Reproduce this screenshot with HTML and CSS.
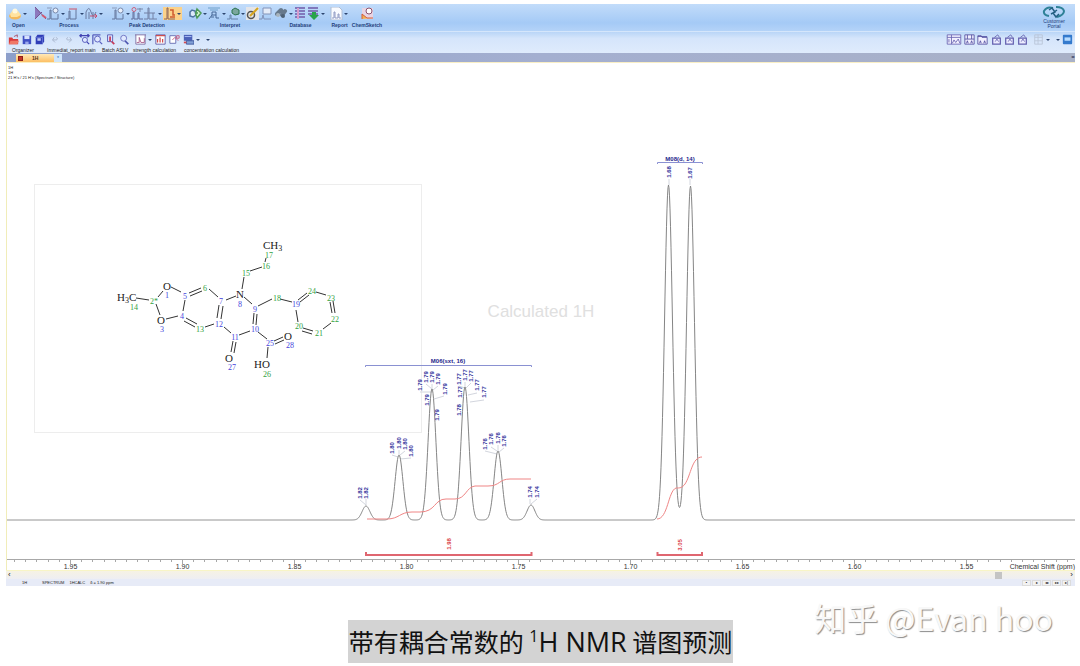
FILE: index.html
```html
<!DOCTYPE html>
<html lang="zh">
<head>
<meta charset="utf-8">
<title>带有耦合常数的 1H NMR 谱图预测</title>
<link rel="stylesheet" href="styles.css">
</head>
<body>
<svg class="defs" aria-hidden="true">
  <symbol id="folder" viewBox="0 0 13 13"><ellipse cx="6" cy="9" rx="6" ry="3.5" fill="#f4b95c"/><path d="M1 7l3-4 5 1 3 4-4 2-6 0z" fill="#ffe3a0"/><circle cx="6" cy="4" r="2.5" fill="#fff8de"/></symbol>
  <symbol id="wedge" viewBox="0 0 13 13"><path d="M1 0v12l6-6z" fill="#8c78bd"/><path d="M1 0l11 12M1 12L8 5" stroke="#76538e" fill="none"/><path d="M8 8l4 3" stroke="#d05a70" stroke-width="2"/></symbol>
  <symbol id="peakc" viewBox="0 0 13 13"><path d="M0 12h3V3h1v9h7V7" fill="none" stroke="#65779c"/><circle cx="8.500" cy="3.500" r="2.500" fill="#e9effa" stroke="#7888aa"/><path d="M0 1h5" stroke="#8b9bbb"/></symbol>
  <symbol id="peakb" viewBox="0 0 13 13"><path d="M0 12h3V4h1v8h6V2" fill="none" stroke="#65779c"/><path d="M3 2h8" stroke="#c77e96" stroke-width="1.500"/></symbol>
  <symbol id="phase" viewBox="0 0 13 13"><path d="M1 12V5q3-7 5 0t5 0M4 12V5M8 12V5" fill="none" stroke="#6b7ba0"/><path d="M5 9h7m-2-2 2 2-2 2" stroke="#c8496b" fill="none"/></symbol>
  <symbol id="multi" viewBox="0 0 13 13"><path d="M0 12h2V5h1v7h4V6h1v6h4" fill="none" stroke="#626f9b"/><circle cx="3" cy="2.500" r="2" fill="none" stroke="#ca617d"/><path d="M6 2h6M9 1v4" stroke="#7888aa"/></symbol>
  <symbol id="integral" viewBox="0 0 13 13"><path d="M0 12h4V1h1v11h8M9 12V6M0 6h11" fill="none" stroke="#7380a4"/></symbol>
  <symbol id="active" viewBox="0 0 13 13"><path d="M1 12h3V1h1v11h7" fill="none" stroke="#8f6657"/><path d="M7 3h3v5h2M7 10h5" fill="none" stroke="#cf5b2f" stroke-width="1.500"/></symbol>
  <symbol id="hex" viewBox="0 0 13 13"><path d="M1 5l2-2 3 1 1 4-3 2-3-1z" fill="#dce9fa" stroke="#4b729f" stroke-width="1.500"/><path d="M6 6h3M8 2l4 4-4 5-1-3V5z" fill="#d6f3ce" stroke="#4c9b57" stroke-width="1.500"/></symbol>
  <symbol id="assign" viewBox="0 0 13 13"><path d="M0 1h12M2 3h8" stroke="#6c9fca"/><path d="M4 5h4v3H4zM4 8l-3 4M8 8v3h3M3 10h3" fill="none" stroke="#456796"/></symbol>
  <symbol id="greenhex" viewBox="0 0 13 13"><path d="M0 12h3V8h1v4h7" fill="none" stroke="#6884aa"/><path d="M8 1l4 2v4l-4 1-3-2V3z" fill="#79a69d" stroke="#2b724d"/></symbol>
  <symbol id="pencil" viewBox="0 0 13 13"><rect width="13" height="13" fill="#e4e5e9"/><circle cx="5" cy="8" r="3.500" fill="none" stroke="#555" stroke-width="1.500"/><path d="M4 9L12 1" stroke="#d7a51f" stroke-width="2"/></symbol>
  <symbol id="report" viewBox="0 0 13 13"><path d="M4 1h8v6H4z" fill="#e4ebf8" stroke="#8192b8"/><path d="M0 12h3l1-4 1 4h7" fill="none" stroke="#8192b8"/></symbol>
  <symbol id="binoc" viewBox="0 0 13 13"><path d="M2 7l4-4M7 8l3-4" stroke="#67798c" stroke-width="4" stroke-linecap="round"/><circle cx="3" cy="8" r="2" fill="#a8b4be"/><circle cx="8" cy="9" r="2" fill="#4e6175"/></symbol>
  <symbol id="base" viewBox="0 0 13 13"><path d="M1 1h10M1 4h10M1 7h10M1 10h10" stroke="#8178bc" stroke-width="2"/><path d="M4 1v11" stroke="#d79ccc" stroke-width="2"/></symbol>
  <symbol id="basedown" viewBox="0 0 13 13"><path d="M1 1h10M1 4h10M1 7h10" stroke="#8178bc" stroke-width="2"/><path d="M5 5h4v3h3l-5 5-5-5h3z" fill="#29a34b"/></symbol>
  <symbol id="page" viewBox="0 0 13 13"><path d="M1 0h8l3 3v10H1z" fill="#f9fbff" stroke="#b0bed4"/><path d="M2 11h2V5h1v6h3V7h1v4h2" fill="none" stroke="#8f9ac3"/></symbol>
  <symbol id="sketch" viewBox="0 0 13 13"><path d="M1 1h11v11H1z" fill="#e8d4e3"/><circle cx="8" cy="4" r="3" fill="#fff" stroke="#8a526f"/><path d="M1 12V7l5 4h6" fill="#efb253" stroke="#d35e3d"/></symbol>
  <symbol id="portal" viewBox="0 0 24 13"><path d="M11 2Q5 0 2 5q-1 4 5 5M14 1q7 0 8 4 0 4-7 6" fill="none" stroke="#2e8197" stroke-width="2"/><path d="M7 4l3-2 3 4-4 2M17 8l-3 3-3-4 4-3" fill="none" stroke="#245f83" stroke-width="1.500"/></symbol>
  <symbol id="open2" viewBox="0 0 13 13"><path d="M1 4h4l1 2h6v6H1z" fill="#d83b3c"/><path d="M3 8h10l-2 4H1z" fill="#f07867"/><path d="M7 3l4-2v3" fill="none" stroke="#a64259"/></symbol>
  <symbol id="save" viewBox="0 0 13 13"><path d="M2 2h10v10H2z" fill="#3f4fc3"/><path d="M4 2h6v4H4z" fill="#d7e1ff"/><path d="M5 9h4v3H5z" fill="#9aa9ed"/></symbol>
  <symbol id="saveall" viewBox="0 0 13 13"><path d="M4 1h8v8l-2 3H2V4z" fill="#303eb8"/><path d="M4 5h4v3H4z" fill="#bdc9f5"/><path d="M2 4h8v8M10 4l2-3" fill="none" stroke="#6778d5"/></symbol>
  <symbol id="undo" viewBox="0 0 13 13"><path d="M5 4L3 7l3 3M3 7h5q2-2-1-3" fill="none" stroke="#a6b3cb"/></symbol>
  <symbol id="redo" viewBox="0 0 13 13"><path d="M8 4l2 3-3 3m3-3H5Q3 5 6 4" fill="none" stroke="#a6b3cb"/></symbol>
  <symbol id="zoomx" viewBox="0 0 13 13"><path d="M1 2h11M3 0L1 2l2 2M10 0l2 2-2 2M9 9l3 3" fill="none" stroke="#4243b3" stroke-width="1.500"/><circle cx="7" cy="7" r="3" fill="#dfe8ff" stroke="#4b50b8"/></symbol>
  <symbol id="zoomy" viewBox="0 0 13 13"><path d="M1 1v11M1 1h9M9 9l3 3" stroke="#5860bf" stroke-width="1.500"/><circle cx="6.500" cy="6" r="3.500" fill="#dfe8ff" stroke="#4b50b8"/></symbol>
  <symbol id="zoomr" viewBox="0 0 13 13"><path d="M3 1h6v8H3z" fill="#dce4ff" stroke="#5053ae"/><path d="M6 3v6M8 9l3 3" stroke="#c63b59" stroke-width="2"/></symbol>
  <symbol id="zoom" viewBox="0 0 13 13"><path d="M7 8l4 4" stroke="#4c55b0" stroke-width="2"/><circle cx="5.500" cy="5" r="3.500" fill="#dfe8ff" stroke="#6268bd"/></symbol>
  <symbol id="chart" viewBox="0 0 13 13"><path d="M0 1h13M1 1v11h11V1" fill="#fff" stroke="#77669c"/><path d="M2 10h3V4l2 6h4V5" fill="none" stroke="#a45886"/></symbol>
  <symbol id="chartr" viewBox="0 0 13 13"><path d="M1 1h11v11H1z" fill="#fff" stroke="#5953a3"/><path d="M1 2h11M3 10V6M6 10V4M9 10V6" stroke="#ce4e4e" stroke-width="1.500"/></symbol>
  <symbol id="links" viewBox="0 0 13 13"><path d="M1 2h7v9H1z" fill="#fff" stroke="#5d63ad"/><path d="M4 7l3-3 4 4M9 2h3v3H9z" fill="none" stroke="#c34f77"/></symbol>
  <symbol id="screen" viewBox="0 0 13 13"><path d="M1 1h10v7H1z" fill="#4c62b8"/><path d="M2 3h8" stroke="#b5c9ff"/><path d="M4 8h9v4H4z" fill="#81a0d6" stroke="#344f99"/><path d="M1 10h3" stroke="#d34a50" stroke-width="2"/></symbol>
  <symbol id="tile" viewBox="0 0 18 13"><path d="M1 1h16v11H1zM1 4h16M6 1v11" fill="#f2f0ff" stroke="#6661b0"/><path d="M7 11l2-4 2 3 3-4 2 5M3 6v4" fill="none" stroke="#6661b0"/></symbol>
  <symbol id="grid" viewBox="0 0 13 13"><path d="M1 1h11v11H1zM1 6h11M4 1v5M9 1v5" fill="#f2f0ff" stroke="#514c9f"/><path d="M3 11l1-3 1 3M8 11l1-3 1 3" fill="none" stroke="#514c9f"/></symbol>
  <symbol id="win" viewBox="0 0 13 13"><path d="M1 2h4l1 2h6v8H1z" fill="#f2f0ff" stroke="#514c9f"/><path d="M1 3h11" stroke="#514c9f"/><path d="M3 11l1-3 1 3M8 11l1-3 1 3" fill="none" stroke="#514c9f"/></symbol>
  <symbol id="winopen" viewBox="0 0 13 13"><path d="M2 5h9v7H2z" fill="#ececff" stroke="#6461b0" stroke-width="1.500"/><path d="M4 4l4-3 2 3M5 9l2-3 2 3" fill="none" stroke="#6461b0"/></symbol>
  <symbol id="faded" viewBox="0 0 13 13"><path d="M2 1h9v11H2zM2 4h9M2 8h9M6 1v11" fill="none" stroke="#b9c5d7"/></symbol>
  <symbol id="bluebox" viewBox="0 0 13 13"><rect x="1" y="1" width="11" height="11" rx="1" fill="#347acd"/><path d="M3 4h7v4H3z" fill="#b7dcff"/></symbol>
</svg>

<main class="app">
  <header class="ribbon">
    <section class="group g-open"><div class="icons"><button class="tool drop" aria-label="Open"><svg><use href="#folder"/></svg></button></div><span>Open</span></section>
    <section class="group g-process"><div class="icons"><button class="tool" aria-label="Fourier transform"><svg><use href="#wedge"/></svg></button><button class="tool drop" aria-label="Calibrate"><svg><use href="#peakc"/></svg></button><button class="tool drop" aria-label="Baseline"><svg><use href="#peakb"/></svg></button><button class="tool drop" aria-label="Phase"><svg><use href="#phase"/></svg></button></div><span>Process</span></section>
    <section class="group g-peak"><div class="icons"><button class="tool drop" aria-label="Peak"><svg><use href="#peakc"/></svg></button><button class="tool" aria-label="Peak levels"><svg><use href="#multi"/></svg></button><button class="tool drop" aria-label="Integrals"><svg><use href="#integral"/></svg></button><button class="tool drop on" aria-label="Multiplets"><svg><use href="#active"/></svg></button></div><span>Peak Detection</span></section>
    <section class="group g-interpret"><div class="icons"><button class="tool drop" aria-label="Structure"><svg><use href="#hex"/></svg></button><button class="tool drop" aria-label="Assign"><svg><use href="#assign"/></svg></button><button class="tool drop" aria-label="Verify"><svg><use href="#greenhex"/></svg></button><button class="tool" aria-label="Edit"><svg><use href="#pencil"/></svg></button><button class="tool" aria-label="Annotate"><svg><use href="#report"/></svg></button></div><span>Interpret</span></section>
    <section class="group g-database"><div class="icons"><button class="tool drop" aria-label="Search"><svg><use href="#binoc"/></svg></button><button class="tool" aria-label="Database"><svg><use href="#base"/></svg></button><button class="tool drop" aria-label="Update database"><svg><use href="#basedown"/></svg></button></div><span>Database</span></section>
    <section class="group g-report"><div class="icons"><button class="tool drop" aria-label="Report"><svg><use href="#page"/></svg></button></div><span>Report</span></section>
    <section class="group g-sketch"><div class="icons"><button class="tool" aria-label="ChemSketch"><svg><use href="#sketch"/></svg></button></div><span>ChemSketch</span></section>
    <button class="portal"><svg><use href="#portal"/></svg><span>Customer<br>Portal</span></button>
  </header>

  <nav class="toolbar">
    <div class="left">
      <div class="icons">
        <button class="tool" aria-label="Open file"><svg><use href="#open2"/></svg></button><button class="tool" aria-label="Save"><svg><use href="#save"/></svg></button><button class="tool" aria-label="Save all"><svg><use href="#saveall"/></svg></button>
        <button class="tool sep" aria-label="Undo"><svg><use href="#undo"/></svg></button><button class="tool" aria-label="Redo"><svg><use href="#redo"/></svg></button>
        <button class="tool sep" aria-label="Zoom X"><svg><use href="#zoomx"/></svg></button><button class="tool" aria-label="Zoom Y"><svg><use href="#zoomy"/></svg></button><button class="tool" aria-label="Zoom region"><svg><use href="#zoomr"/></svg></button><button class="tool gap" aria-label="Zoom out"><svg><use href="#zoom"/></svg></button>
        <button class="tool drop sep" aria-label="View"><svg><use href="#chart"/></svg></button><button class="tool gap" aria-label="Table"><svg><use href="#chartr"/></svg></button><button class="tool gap" aria-label="Link"><svg><use href="#links"/></svg></button><button class="tool drop gap" aria-label="Screen"><svg><use href="#screen"/></svg></button><button class="tool drop more" aria-label="More"></button>
      </div>
      <div class="names"><span>Organizer</span><span>Immediat_report main</span><span>Batch ASLV</span><span>strength calculation</span><span>concentration calculation</span></div>
    </div>
    <div class="icons right">
      <button class="tool wide" aria-label="Tile"><svg><use href="#tile"/></svg></button><button class="tool" aria-label="Stack"><svg><use href="#grid"/></svg></button><button class="tool" aria-label="Cascade"><svg><use href="#win"/></svg></button><button class="tool gap" aria-label="Import"><svg><use href="#winopen"/></svg></button><button class="tool" aria-label="Export"><svg><use href="#winopen"/></svg></button><button class="tool" aria-label="Export all"><svg><use href="#winopen"/></svg></button><button class="tool drop sep" aria-label="Layout"><svg><use href="#faded"/></svg></button><button class="tool drop more" aria-label="Options"></button><button class="tool" aria-label="Window"><svg><use href="#bluebox"/></svg></button>
    </div>
  </nav>

  <div class="tabs"><button class="tab"><i></i>1H</button><button class="newtab" aria-label="New tab">*</button><span class="tabend">◂▸</span></div>

  <svg class="plot" viewBox="7 63 1068 507" role="img" aria-label="Calculated 1H spectrum">
    <g class="info"><text x="8" y="69">1H</text><text x="8" y="74">1H</text><text x="8" y="79">21 H's / 21 H's (Spectrum / Structure)</text></g>
    <rect class="frame" x="34.500" y="184.500" width="387" height="248"/>
    <text class="calc" x="541" y="317">Calculated 1H</text>
    <path class="bond" d="M136 298l13 2M158 297l5-6M171 287l10 5M156 304l4 11M166 319l12-3M185 300l-2 11M189 293l12-5M190 296l12-5M209 289l9 8M186 318l11 6M184 321l11 6M205 327l9-3M219 305l-2 13M223 306l-2 13M226 300l10-4M244 297l8 7M242 289l2-12M250 271l12-4M265 262l1-4M258 306l14-7M280 299l12 3M298 300l9-7M300 302l9-7M316 292l10 3M330 302l2 11M333 301l2 12M331 323l-8 6M313 331l-10-3M312 334l-10-3M298 322l-2-12M254 313l-1 11M257 314l-1 11M224 327l7 6M239 335l11-4M233 341l-2 11M236 342l-2 11M258 332l9 7M274 341l9-4M275 344l9-4M268 347l-1 11"/>
    <g class="atom"><text x="263" y="249">CH<tspan class="sub" dy="2">3</tspan></text><text x="117" y="301">H<tspan class="sub" dy="2">3</tspan><tspan dy="-2">C</tspan></text><text x="163" y="290">O</text><text x="157" y="324">O</text><text x="236" y="298">N</text><text x="225" y="362">O</text><text x="284" y="340">O</text><text x="254" y="368">HO</text></g>
    <g class="num green"><text x="269" y="258">17</text><text x="266" y="269">16</text><text x="246" y="276">15</text><text x="205" y="291">6</text><text x="154" y="304">2*</text><text x="134" y="310">14</text><text x="200" y="332">13</text><text x="277" y="301">18</text><text x="312" y="294">24</text><text x="331" y="301">23</text><text x="335" y="322">22</text><text x="319" y="336">21</text><text x="299" y="329">20</text><text x="267" y="377">26</text></g>
    <g class="num blue"><text x="167" y="298">1</text><text x="162" y="332">3</text><text x="182" y="319">4</text><text x="185" y="299">5</text><text x="221" y="304">7</text><text x="240" y="307">8</text><text x="255" y="312">9</text><text x="255" y="332">10</text><text x="235" y="340">11</text><text x="219" y="327">12</text><text x="296" y="307">19</text><text x="270" y="346">25</text><text x="232" y="370">27</text><text x="290" y="348">28</text></g>
    <path class="leader" d="M360 500l6 5M366 499v6M392 455l6 2M399 450v5M405 451l-5 4M411 458l-11 1M420 392l11 0M426 384l6 5M432 384v5M438 386l-5 4M444 396l-10 3M459 386l6 2M465 382v5M471 383l-5 5M477 393l-9 2M484 400l-14 2M485 451l12 3M491 447l6 4M498 445v6M504 448l-5 4M530 499v5M537 499l-6 5M669 179v6M690 179v6"/>
    <path id="trace" class="trace"/>
    <path class="red" d="M367 519h20C399 519 400 512 412 512h8C436 512 434 499 446 499h9C466 499 466 487 475 486h13C500 486 499 479 510 479h21M657 519C668 519 668 491 676 488C680 488 682 488 685 484C691 475 692 457 702 457"/>
    <path class="bar" d="M365.500 367v-1.500h166v1.500M657.500 164v-1.500h45v1.500"/>
    <g class="mult"><text x="448" y="363">M06(sxt, 16)</text><text x="680" y="161">M08(d, 14)</text></g>
    <g id="shifts" class="shift"></g>
    <path class="redbar" d="M366 552v3h165.500v-3M657.500 552v3h44.500v-3"/>
    <g class="area"><text transform="translate(451 544) rotate(-90)">1.98</text><text transform="translate(682 545) rotate(-90)">3.05</text></g>
    <path id="axis" class="axis"/>
    <g id="ticks" class="ticks"></g>
    <text class="axname" x="1075" y="569">Chemical Shift (ppm)</text>
  </svg>

  <div class="scroll"><button aria-label="Scroll left">‹</button><span class="thumb"></span><button aria-label="Scroll right">›</button></div>
  <footer class="status"><span class="nuc">1H</span><span>SPECTRUM</span><span>1HCALC</span><span>δ = 1.90 ppm</span><div class="nav"><button>▪</button><button>▸</button><button>◂▸</button><button>▸▸</button><button>▸|</button></div></footer>
</main>

<section class="below"><h1>带有耦合常数的 <span class="latin"><sup>1</sup>H NMR</span> 谱图预测</h1><p>知乎 @Evan hoo</p></section>
<script src="plot.js"></script>
</body>
</html>
```
FILE: styles.css
```css
* { box-sizing: border-box; }
body { margin: 0; padding: 4px 5px 0 6px; background: #fff; font-family: "Liberation Sans", "Noto Sans CJK SC", sans-serif; }
button { border: 0; padding: 0; margin: 0; background: none; font: inherit; color: inherit; }
.defs { position: absolute; width: 0; height: 0; }
.app { display: flex; flex-direction: column; font-size: 5px; line-height: 6px; color: #222; }
.ribbon { display: flex; height: 27px; background: linear-gradient(#c2dcfa, #a5caf6 70%, #b4d3f8); color: #24417c; }
.group { display: flex; flex-direction: column; align-items: center; padding-top: 3px; font-weight: bold; white-space: nowrap; }
.group > span { padding-top: 2px; }
.g-open { width: 25px; }
.g-process { width: 76px; }
.g-peak { width: 80px; }
.g-interpret { width: 86px; }
.g-database { width: 55px; }
.g-report { width: 23px; }
.g-sketch { width: 32px; }
.icons { display: flex; align-items: center; }
.tool { display: flex; align-items: center; flex: none; height: 13px; }
.tool svg { width: 13px; height: 13px; display: block; }
.toolbar .tool svg { padding: 1px; }
.drop::after { content: ""; margin: 0 1px; border: 2px solid transparent; border-top-color: #2c456f; border-bottom: 0; }
.on { background: #fbd28a; }
.portal { display: flex; flex-direction: column; align-items: center; margin-left: auto; padding: 2px 9px 0 0; line-height: 5px; }
.portal svg { width: 24px; height: 13px; }
.toolbar { display: flex; justify-content: space-between; height: 22px; background: linear-gradient(#b9d5f7, #d5e5fb 30%, #dfebfc); border-top: 1px solid #d5e6fb; }
.toolbar .icons { padding: 1px 0 0 1px; }
.sep { margin-left: 3px; }
.gap { margin-left: 1px; }
.more { padding-left: 4px; }
.names { display: grid; grid-template-columns: 35px 55px 31px 51px auto; padding: 1px 0 0 6px; white-space: nowrap; }
.toolbar .right { align-self: flex-start; padding-right: 1px; }
.toolbar .wide svg { width: 18px; }
.tabs { display: flex; height: 9px; background: linear-gradient(90deg, #8d9fca, #a4afd0 50%, #a9b1c7); padding: 1px 0 0 10px; }
.tab { display: flex; align-items: center; gap: 9px; width: 38px; padding-left: 2px; background: linear-gradient(#ffe9b8, #fdbf64); font-weight: bold; color: #53341b; }
.tab i { width: 5px; height: 5px; background: #c23525; border: 1px solid #8f201b; }
.newtab { width: 8px; background: #cfe5fb; color: #2c68af; }
.tabend { margin-left: auto; color: #34415f; font-size: 4px; }
.plot { display: block; width: 100%; height: auto; border-left: 1px solid #f1edb9; border-top: 1px solid #f9eec4; overflow: visible; }
.info text { font-size: 4px; fill: #222; }
.frame { fill: none; stroke: #ededed; }
.calc { font-size: 17px; fill: #e0e0e0; text-anchor: middle; }
.bond { fill: none; stroke: #333; stroke-width: 1; }
.atom text, .num text { font-family: "Liberation Serif", serif; }
.atom text { font-size: 11px; fill: #222; }
.atom .sub { font-size: 8px; }
.num text { font-size: 8px; text-anchor: middle; }
.green { fill: #32a142; }
.blue { fill: #4545dc; }
.leader { fill: none; stroke: #d3d6de; stroke-width: 1; }
.trace { fill: none; stroke: #858585; stroke-width: 1; }
.red { fill: none; stroke: #ef8585; stroke-width: 1; }
.bar { fill: none; stroke: #8a91d2; stroke-width: 1; }
.mult text { font-size: 6px; font-weight: bold; fill: #25258b; text-anchor: middle; }
.shift text { font-size: 6px; fill: #30309a; font-weight: bold; text-anchor: middle; }
.redbar { fill: none; stroke: #df6670; stroke-width: 2; }
.area text { font-size: 6px; font-weight: bold; fill: #db3f47; text-anchor: middle; }
.axis { fill: none; stroke: #a8a8a8; stroke-width: 1; }
.ticks text, .axname { font-size: 7px; fill: #333; }
.ticks text { text-anchor: middle; }
.axname { text-anchor: end; }
.scroll { display: flex; align-items: center; height: 9px; padding: 0 2px; border-top: 1px solid #f8f5c6; background: linear-gradient(#f6f2e4, #eeeef2); font-size: 8px; }
.thumb { width: 7px; height: 7px; background: #c4c4c4; margin-left: auto; margin-right: 68px; }
.status { display: flex; align-items: center; gap: 5px; height: 7px; padding: 0 4px 0 16px; background: #e7ebf7; font-size: 4px; white-space: pre; }
.nuc { width: 15px; }
.nav { display: flex; margin-left: auto; gap: 1px; }
.nav button { width: 9px; height: 6px; background: #f2f2f2; border: 1px solid #dcdcdc; line-height: 4px; }
.below { display: grid; grid-template-columns: 1fr auto 1fr; padding: 13px 22px 0 0; }
h1 { grid-column: 2; margin: 21px 0 0 22px; padding: 0 1px; background: #d3d3d3; font: 400 25px/43px "Noto Sans CJK SC", sans-serif; color: #111; white-space: nowrap; }
.latin { font-family: "Open Sans", sans-serif; font-size: 27px; line-height: 1; }
.latin sup { font-size: 16px; line-height: 0; }
.below p { margin: 0; justify-self: end; font: 400 32px/36px "Noto Sans CJK SC", sans-serif; color: #f8f8f8; text-shadow: 1px 1px 1px #8c8c8c; white-space: nowrap; }
```
FILE: plot.js
```js
const BASE = 520;
const peaks = [[366, 14], [399, 65], [432, 131], [465, 133], [498, 69], [531, 15], [668.5, 335], [690.5, 334]];
const sigma = 3.9;
let line = "";
for (let x = 7; x <= 1075; x += 0.5) {
  const h = peaks.reduce((sum, [c, a]) => sum + a * Math.exp(-((x - c) ** 2) / (2 * sigma * sigma)), 0);
  line += (line ? "L" : "M") + x + " " + (BASE - h).toFixed(2);
}
document.getElementById("trace").setAttribute("d", line);

const shifts = [
  ["1.82", 360, 493], ["1.82", 366, 493],
  ["1.80", 392, 448], ["1.80", 399, 443], ["1.80", 405, 444], ["1.80", 411, 451],
  ["1.79", 420, 385], ["1.79", 426, 377], ["1.79", 432, 377], ["1.79", 438, 379], ["1.79", 445, 389], ["1.79", 427, 400], ["1.79", 437, 415],
  ["1.77", 459, 379], ["1.77", 465, 375], ["1.77", 471, 376], ["1.77", 477, 385], ["1.77", 484, 392], ["1.77", 460, 392], ["1.78", 459, 410],
  ["1.76", 485, 444], ["1.76", 491, 439], ["1.76", 498, 438], ["1.76", 504, 441],
  ["1.74", 530, 492], ["1.74", 537, 492],
  ["1.68", 669, 172], ["1.67", 690, 173]
];
document.getElementById("shifts").innerHTML = shifts
  .map(([t, x, y]) => `<text transform="translate(${x + 2} ${y}) rotate(-90)">${t}</text>`).join("");

let axis = "M7 559.5H1075";
let labels = "";
for (let i = -5; i <= 89; i++) {
  const x = Math.round(70 + i * 11.2) + 0.5;
  if (x > 1070) break;
  axis += `M${x} 560v${i % 10 === 0 ? 4 : 2}`;
  if (i >= 0 && i % 10 === 0) labels += `<text x="${x}" y="569">${(1.95 - i * 0.005).toFixed(2)}</text>`;
}
document.getElementById("axis").setAttribute("d", axis);
document.getElementById("ticks").innerHTML = labels;
```
